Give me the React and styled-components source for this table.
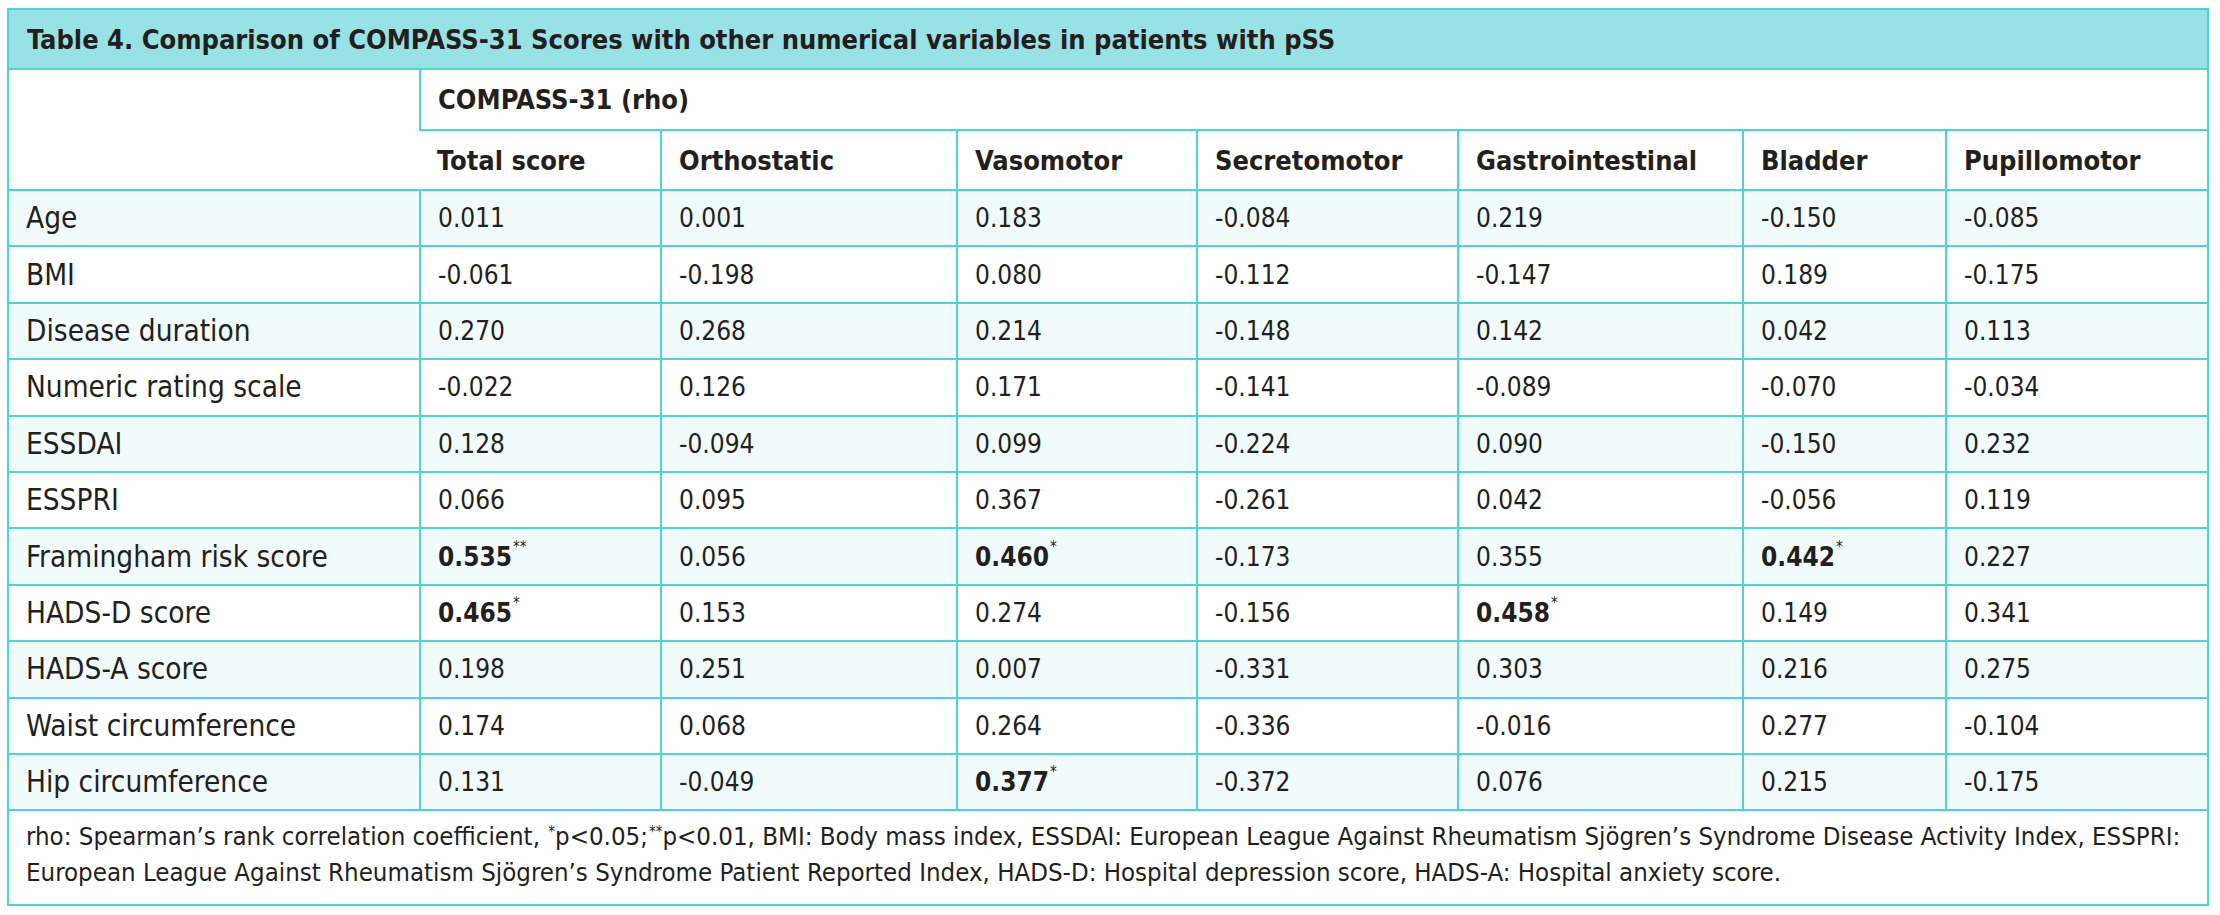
import React from 'react';
import styled, { createGlobalStyle } from 'styled-components';

const GlobalStyle = createGlobalStyle`
  html, body {
    margin: 0;
    padding: 0;
    background: #ffffff;
  }
  body {
    font-family: "DejaVu Sans Condensed", "Liberation Sans", sans-serif;
    color: #231f20;
  }
`;

const line = '#4fd2d8';

const Page = styled.div`
  padding: 8px 0 0 7px;
`;

const Frame = styled.div`
  width: 2202px;
  border: 2px solid ${line};
  box-sizing: border-box;
`;

const Caption = styled.div`
  height: 58px;
  display: flex;
  align-items: center;
  padding-left: 18px;
  background: #98e2e5;
  border-bottom: 2px solid ${line};
  font-size: 27px;
  font-weight: bold;
`;

const Table = styled.table`
  width: 100%;
  border-collapse: collapse;
  table-layout: fixed;
`;

const Row = styled.tr`
  background: ${p => (p.$shade ? '#f2fbfb' : '#ffffff')};
`;

// $kind: 'head' | 'label' | 'value'
const sizes = { head: 27, label: 29.5, value: 26 };

const Cell = styled.td`
  height: ${p => p.$h || 56.4}px;
  padding: 0 0 0 17px;
  box-sizing: border-box;
  border-left: 2px solid ${line};
  border-bottom: 2px solid ${line};
  font-size: ${p => sizes[p.$kind || 'value']}px;
  font-weight: ${p => (p.$kind === 'head' ? 'bold' : 'normal')};
  white-space: nowrap;
  &:first-child {
    border-left: none;
  }
`;

const Note = styled.td`
  padding: 7px 10px 14px 17px;
  font-size: 25.6px;
  line-height: 36px;
`;

const Star = styled.sup`
  font-size: 15px;
  font-weight: normal;
  vertical-align: top;
  position: relative;
  top: -4px;
  margin-left: 1px;
`;

const widths = [411, 241, 296, 240, 261, 285, 203, 261];

const columns = ['Total score', 'Orthostatic', 'Vasomotor', 'Secretomotor', 'Gastrointestinal', 'Bladder', 'Pupillomotor'];

const rows = [
  ['Age', '0.011', '0.001', '0.183', '-0.084', '0.219', '-0.150', '-0.085'],
  ['BMI', '-0.061', '-0.198', '0.080', '-0.112', '-0.147', '0.189', '-0.175'],
  ['Disease duration', '0.270', '0.268', '0.214', '-0.148', '0.142', '0.042', '0.113'],
  ['Numeric rating scale', '-0.022', '0.126', '0.171', '-0.141', '-0.089', '-0.070', '-0.034'],
  ['ESSDAI', '0.128', '-0.094', '0.099', '-0.224', '0.090', '-0.150', '0.232'],
  ['ESSPRI', '0.066', '0.095', '0.367', '-0.261', '0.042', '-0.056', '0.119'],
  ['Framingham risk score', '0.535**', '0.056', '0.460*', '-0.173', '0.355', '0.442*', '0.227'],
  ['HADS-D score', '0.465*', '0.153', '0.274', '-0.156', '0.458*', '0.149', '0.341'],
  ['HADS-A score', '0.198', '0.251', '0.007', '-0.331', '0.303', '0.216', '0.275'],
  ['Waist circumference', '0.174', '0.068', '0.264', '-0.336', '-0.016', '0.277', '-0.104'],
  ['Hip circumference', '0.131', '-0.049', '0.377*', '-0.372', '0.076', '0.215', '-0.175'],
];

const Value = ({ v }) => {
  const m = v.match(/^(.*?)(\*+)$/);
  if (!m) return v;
  return (
    <>
      <b>{m[1]}</b>
      <Star>{m[2]}</Star>
    </>
  );
};

export default function App() {
  return (
    <Page>
      <GlobalStyle />
      <Frame>
        <Caption>Table 4. Comparison of COMPASS-31 Scores with other numerical variables in patients with pSS</Caption>
        <Table>
          <colgroup>
            {widths.map((w, i) => (
              <col key={i} style={{ width: w }} />
            ))}
          </colgroup>
          <tbody>
            <Row>
              <Cell rowSpan={2} $h={120} $kind="head" />
              <Cell colSpan={7} $kind="head" $h={60}>COMPASS-31 (rho)</Cell>
            </Row>
            <Row>
              {columns.map(c => (
                <Cell key={c} $kind="head" $h={60}>{c}</Cell>
              ))}
            </Row>
            {rows.map((r, i) => (
              <Row key={r[0]} $shade={i % 2 === 0}>
                {r.map((v, j) => (
                  <Cell key={j} $kind={j === 0 ? 'label' : 'value'}>
                    <Value v={v} />
                  </Cell>
                ))}
              </Row>
            ))}
            <tr>
              <Note colSpan={8}>
                rho: Spearman’s rank correlation coefficient, <Star>*</Star>p&lt;0.05;<Star>**</Star>p&lt;0.01, BMI: Body mass index, ESSDAI: European League Against Rheumatism Sjögren’s Syndrome Disease Activity Index, ESSPRI: European League Against Rheumatism Sjögren’s Syndrome Patient Reported Index, HADS-D: Hospital depression score, HADS-A: Hospital anxiety score.
              </Note>
            </tr>
          </tbody>
        </Table>
      </Frame>
    </Page>
  );
}
